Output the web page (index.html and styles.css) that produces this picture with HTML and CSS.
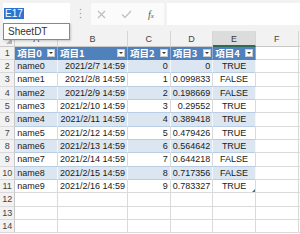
FILE: index.html
```html
<!DOCTYPE html>
<html lang="ja">
<head>
<meta charset="utf-8">
<title>Sheet</title>
<link rel="stylesheet" href="styles.css">
</head>
<body>
<div class="app">
  <div class="topbar">
    <div class="namebox"><span class="sel">E17</span></div>
    <div class="grip">
      <svg width="3" height="11" viewBox="0 0 3 11"><circle cx="1.5" cy="1.5" r="0.8"/><circle cx="1.5" cy="5.5" r="0.8"/><circle cx="1.5" cy="9.5" r="0.8"/></svg>
    </div>
    <div class="fbtns">
      <svg class="ic" width="9" height="9" viewBox="0 0 9 9"><path d="M1 1L8 8M8 1L1 8"/></svg>
      <svg class="ic" width="11" height="9" viewBox="0 0 11 9"><path d="M1 4.5L4 7.5L10 1"/></svg>
      <span class="fx">f<span class="fxs">x</span></span>
    </div>
    <div class="finput"></div>
  </div>

  <div class="sheet">
    <div class="row colhead">
      <div class="corner"><span class="tri"></span></div>
      <div class="ch">A</div><div class="ch">B</div><div class="ch">C</div><div class="ch">D</div><div class="ch chsel">E</div><div class="ch">F</div><div class="ch"></div><div class="ch"></div>
    </div>

    <div class="row">
      <div class="rh">1</div>
      <div class="c th"><span>項目0</span><span class="dd"></span></div>
      <div class="c th"><span>項目1</span><span class="dd"></span></div>
      <div class="c th"><span>項目2</span><span class="dd"></span></div>
      <div class="c th"><span>項目3</span><span class="dd"></span></div>
      <div class="c th"><span>項目4</span><span class="dd"></span></div>
      <div class="c"></div><div class="c"></div><div class="c"></div>
    </div>

    <div class="row band">
      <div class="rh">2</div><div class="c tc l">name0</div><div class="c tc r">2021/2/7 14:59</div><div class="c tc r">0</div><div class="c tc r">0</div><div class="c tc m">TRUE</div><div class="c"></div><div class="c"></div><div class="c"></div>
    </div>
    <div class="row">
      <div class="rh">3</div><div class="c tc l">name1</div><div class="c tc r">2021/2/8 14:59</div><div class="c tc r">1</div><div class="c tc r">0.099833</div><div class="c tc m">FALSE</div><div class="c"></div><div class="c"></div><div class="c"></div>
    </div>
    <div class="row band">
      <div class="rh">4</div><div class="c tc l">name2</div><div class="c tc r">2021/2/9 14:59</div><div class="c tc r">2</div><div class="c tc r">0.198669</div><div class="c tc m">FALSE</div><div class="c"></div><div class="c"></div><div class="c"></div>
    </div>
    <div class="row">
      <div class="rh">5</div><div class="c tc l">name3</div><div class="c tc r">2021/2/10 14:59</div><div class="c tc r">3</div><div class="c tc r">0.29552</div><div class="c tc m">TRUE</div><div class="c"></div><div class="c"></div><div class="c"></div>
    </div>
    <div class="row band">
      <div class="rh">6</div><div class="c tc l">name4</div><div class="c tc r">2021/2/11 14:59</div><div class="c tc r">4</div><div class="c tc r">0.389418</div><div class="c tc m">TRUE</div><div class="c"></div><div class="c"></div><div class="c"></div>
    </div>
    <div class="row">
      <div class="rh">7</div><div class="c tc l">name5</div><div class="c tc r">2021/2/12 14:59</div><div class="c tc r">5</div><div class="c tc r">0.479426</div><div class="c tc m">TRUE</div><div class="c"></div><div class="c"></div><div class="c"></div>
    </div>
    <div class="row band">
      <div class="rh">8</div><div class="c tc l">name6</div><div class="c tc r">2021/2/13 14:59</div><div class="c tc r">6</div><div class="c tc r">0.564642</div><div class="c tc m">TRUE</div><div class="c"></div><div class="c"></div><div class="c"></div>
    </div>
    <div class="row">
      <div class="rh">9</div><div class="c tc l">name7</div><div class="c tc r">2021/2/14 14:59</div><div class="c tc r">7</div><div class="c tc r">0.644218</div><div class="c tc m">FALSE</div><div class="c"></div><div class="c"></div><div class="c"></div>
    </div>
    <div class="row band">
      <div class="rh">10</div><div class="c tc l">name8</div><div class="c tc r">2021/2/15 14:59</div><div class="c tc r">8</div><div class="c tc r">0.717356</div><div class="c tc m">FALSE</div><div class="c"></div><div class="c"></div><div class="c"></div>
    </div>
    <div class="row last">
      <div class="rh">11</div><div class="c tc l">name9</div><div class="c tc r">2021/2/16 14:59</div><div class="c tc r">9</div><div class="c tc r">0.783327</div><div class="c tc m endcell">TRUE<span class="handle"></span></div><div class="c"></div><div class="c"></div><div class="c"></div>
    </div>
    <div class="row">
      <div class="rh">12</div><div class="c"></div><div class="c"></div><div class="c"></div><div class="c"></div><div class="c"></div><div class="c"></div><div class="c"></div><div class="c"></div>
    </div>
    <div class="row">
      <div class="rh">13</div><div class="c"></div><div class="c"></div><div class="c"></div><div class="c"></div><div class="c"></div><div class="c"></div><div class="c"></div><div class="c"></div>
    </div>
    <div class="row">
      <div class="rh">14</div><div class="c"></div><div class="c"></div><div class="c"></div><div class="c"></div><div class="c"></div><div class="c"></div><div class="c"></div><div class="c"></div>
    </div>
  </div>

  <div class="namelist">SheetDT</div>
</div>
</body>
</html>
```

FILE: styles.css
```css
html, body {
  margin: 0;
  padding: 0;
}
body {
  width: 300px;
  height: 234px;
  overflow: hidden;
  background: #ffffff;
  font-family: "Liberation Sans", Arial, sans-serif;
}
.app {
  position: relative;
  width: 300px;
  height: 234px;
  overflow: hidden;
}

/* formula bar */
.topbar {
  height: 31px;
  box-sizing: border-box;
  background: #f2f2f2;
  display: flex;
  align-items: flex-start;
  padding: 3px 0 0 3px;
}
.namebox {
  width: 67px;
  height: 20px;
  background: #ffffff;
  display: flex;
  align-items: center;
  padding-left: 1px;
  box-sizing: border-box;
}
.sel {
  background: #2f73cf;
  color: #ffffff;
  font-size: 10px;
  line-height: 11px;
  padding: 0 1px;
}
.grip {
  width: 21px;
  height: 21px;
  display: flex;
  align-items: center;
  justify-content: center;
}
.grip svg {
  fill: #a8a8a8;
}
.fbtns {
  width: 73px;
  height: 22px;
  background: #fbfbfb;
  display: flex;
  align-items: center;
  padding-left: 6px;
  gap: 15px;
  box-sizing: border-box;
}
.ic path {
  fill: none;
  stroke: #bdbdbd;
  stroke-width: 1.2;
}
.fx {
  font-family: "Liberation Serif", "Times New Roman", serif;
  font-style: italic;
  font-size: 10px;
  color: #555555;
  margin-left: 1px;
}
.fxs {
  font-size: 7px;
}
.finput {
  flex: 1;
  height: 22px;
  margin-left: 3px;
  background: #ffffff;
}

/* sheet grid */
.sheet {
  display: flex;
  flex-direction: column;
}
.row {
  display: grid;
  grid-template-columns: 15.33px 42.67px 70px 42.67px 42.66px 42.67px 42.67px 42.67px 1fr;
  height: 13.33px;
}
.colhead {
  height: 15.67px;
  background: #f2f2f2;
}
.corner {
  position: relative;
  border-right: 1px solid #d0d0d0;
  border-bottom: 1px solid #c8c8c8;
  box-sizing: border-box;
}
.tri {
  position: absolute;
  right: 2px;
  bottom: 2px;
  width: 0;
  height: 0;
  border-left: 6px solid transparent;
  border-bottom: 6px solid #b4b4b4;
}
.ch {
  box-sizing: border-box;
  border-right: 1px solid #d6d6d6;
  border-bottom: 1px solid #c8c8c8;
  font-size: 9px;
  color: #444444;
  display: flex;
  align-items: center;
  justify-content: center;
  padding-top: 2px;
}
.chsel {
  background: #dcdcdc;
  border-bottom: 2px solid #2f6b53;
  color: #3a3a3a;
}
.rh {
  background: #f2f2f2;
  box-sizing: border-box;
  border-right: 1px solid #c8c8c8;
  border-bottom: 1px solid #dadada;
  font-size: 9px;
  color: #444444;
  display: flex;
  align-items: center;
  justify-content: center;
}
.c {
  box-sizing: border-box;
  border-right: 1px solid #dadada;
  border-bottom: 1px solid #dadada;
  font-size: 9px;
  color: #1a1a1a;
  display: flex;
  align-items: center;
  white-space: nowrap;
  overflow: hidden;
}
.th {
  background: #4f81bd;
  border-right-color: #8eaad3;
  border-bottom-color: #4f81bd;
  color: #ffffff;
  font-family: "Noto Sans CJK JP", "Noto Sans CJK SC", sans-serif;
  font-weight: 700;
  font-size: 9.5px;
  padding: 0 1.5px 0 2px;
  justify-content: space-between;
}
.dd {
  width: 8px;
  height: 8px;
  box-sizing: border-box;
  background: #ffffff;
  border: 1px solid #c9c9c9;
  position: relative;
  flex: none;
}
.dd::after {
  content: "";
  position: absolute;
  left: 1px;
  top: 2px;
  border-left: 2px solid transparent;
  border-right: 2px solid transparent;
  border-top: 2.5px solid #333333;
}
.tc {
  border-bottom-color: #b9cde5;
}
.band .tc {
  background: #dce6f1;
  border-right-color: #f3f6fa;
}
.last .tc {
  border-bottom-color: #dadada;
}
.l {
  padding-left: 2px;
}
.r {
  justify-content: flex-end;
  padding-right: 2px;
}
.m {
  justify-content: center;
}
.endcell {
  position: relative;
}
.handle {
  position: absolute;
  right: 0;
  bottom: 0;
  width: 0;
  height: 0;
  border-left: 3px solid transparent;
  border-bottom: 3px solid #4a6c93;
}

/* name dropdown list */
.namelist {
  position: absolute;
  z-index: 2;
  left: 3px;
  top: 23px;
  width: 67px;
  height: 16.5px;
  box-sizing: border-box;
  background: #ffffff;
  border: 1px solid #7d8c9c;
  box-shadow: 1px 1px 2px rgba(0, 0, 0, 0.18);
  font-size: 10px;
  color: #333333;
  padding-left: 4px;
  display: flex;
  align-items: center;
}
```
